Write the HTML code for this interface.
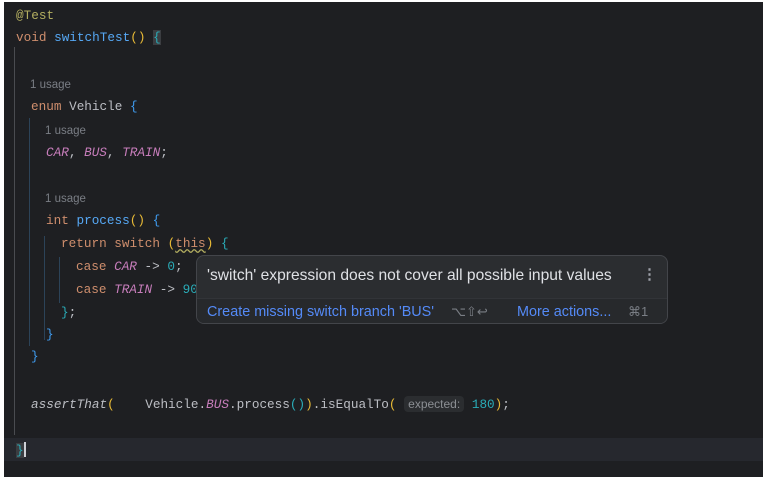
<!DOCTYPE html><html><head><style>
body{margin:0;width:768px;height:481px;background:#fff;overflow:hidden;position:relative}
#ed{position:absolute;left:4px;top:2px;width:759px;height:475px;background:#1e1f22;overflow:hidden}
.l{position:absolute;font-family:"Liberation Mono",monospace;font-size:12.7px;white-space:pre;color:#bcbec4;line-height:16px}
.u{position:absolute;font-family:"Liberation Sans",sans-serif;font-size:11.5px;color:#7a7e85;line-height:14px}
.k{color:#cf8e6d}.f{color:#56a8f5}.a{color:#b3ae60}.p{color:#c77dbb;font-style:italic}.n{color:#2aacb8}.y{color:#e8ba36}.b{color:#3f9cf0}.g{color:#2aacb8}
.v{position:absolute;width:1px}
</style></head><body><div id="ed">
<div style="position:absolute;left:0;top:436px;width:759px;height:23px;background:#26282e"></div>
<div class="v" style="left:10px;top:45px;height:388px;background:#4a4c50"></div>
<div class="v" style="left:25px;top:116px;height:228px;background:#2c4358"></div>
<div class="v" style="left:40px;top:234px;height:104px;background:#2c4358"></div>
<div class="v" style="left:55px;top:255px;height:46px;background:#2c4358"></div>
<div class="l" style="left:12px;top:6px"><span class="a">@Test</span></div>
<div class="l" style="left:12px;top:28px"><span class="k">void </span><span class="f">switchTest</span><span class="y">()</span> <span style="background:#3b3d41;color:#2aacb8">{</span></div>
<div class="u" style="left:26px;top:76px">1 usage</div>
<div class="l" style="left:27px;top:97px"><span class="k">enum </span>Vehicle <span class="b">{</span></div>
<div class="u" style="left:41px;top:122px">1 usage</div>
<div class="l" style="left:42px;top:143px"><span class="p">CAR</span>, <span class="p">BUS</span>, <span class="p">TRAIN</span>;</div>
<div class="u" style="left:41px;top:190px">1 usage</div>
<div class="l" style="left:42px;top:211px"><span class="k">int </span><span class="f">process</span><span class="y">()</span> <span class="b">{</span></div>
<div class="l" style="left:57px;top:234px"><span class="k">return switch </span><span class="y">(</span><span class="k" style="text-decoration:underline wavy #b3ae60">this</span><span class="y">)</span> <span class="g">{</span></div>
<div class="l" style="left:72px;top:257px"><span class="k">case </span><span class="p">CAR</span> -&gt; <span class="n">0</span>;</div>
<div class="l" style="left:72px;top:280px"><span class="k">case </span><span class="p">TRAIN</span> -&gt; <span class="n">90</span></div>
<div class="l" style="left:57px;top:303px"><span class="g">}</span>;</div>
<div class="l" style="left:42px;top:325px"><span class="b">}</span></div>
<div class="l" style="left:27px;top:347px"><span class="b">}</span></div>
<div class="l" style="left:27px;top:394px"><i>assertThat</i><span class="y">(</span>    Vehicle.<span class="p">BUS</span>.process<span class="g">()</span><span class="y">)</span>.isEqualTo<span class="y">(</span> <span style="font-family:'Liberation Sans',sans-serif;font-size:12px;color:#8c8f94;background:#2b2d30;border-radius:4px;padding:1px 4px">expected:</span> <span class="n">180</span><span class="y">)</span>;</div>
<div class="l" style="left:12px;top:440px"><span style="background:#3b3d41;color:#2aacb8">}</span><span style="display:inline-block;width:2px;height:15px;background:#ced0d6;vertical-align:-3px"></span></div>
<div style="position:absolute;left:192px;top:253px;width:472px;height:69px;background:#2b2d30;border:1px solid #43454a;border-radius:8px;box-sizing:border-box;overflow:hidden;font-family:'Liberation Sans',sans-serif">
<div style="position:absolute;left:10px;top:11px;font-size:15.6px;color:#dfe1e5">'switch' expression does not cover all possible input values</div>
<div style="position:absolute;right:10px;top:9px;font-size:15px;color:#9da0a8;font-weight:bold">&#8942;</div>
<div style="position:absolute;left:0;top:42px;width:100%;height:27px;background:#27292c;border-top:1px solid #323438"></div>
<div style="position:absolute;left:10px;top:48px;font-size:14.4px;color:#548af7">Create missing switch branch 'BUS'</div>
<div style="position:absolute;left:254px;top:48px;font-size:13px;color:#7a7e85">⌥⇧↩</div>
<div style="position:absolute;left:320px;top:48px;font-size:14.4px;color:#548af7">More actions...</div>
<div style="position:absolute;left:431px;top:48px;font-size:13px;color:#7a7e85">⌘1</div>
</div>
</div></body></html>
